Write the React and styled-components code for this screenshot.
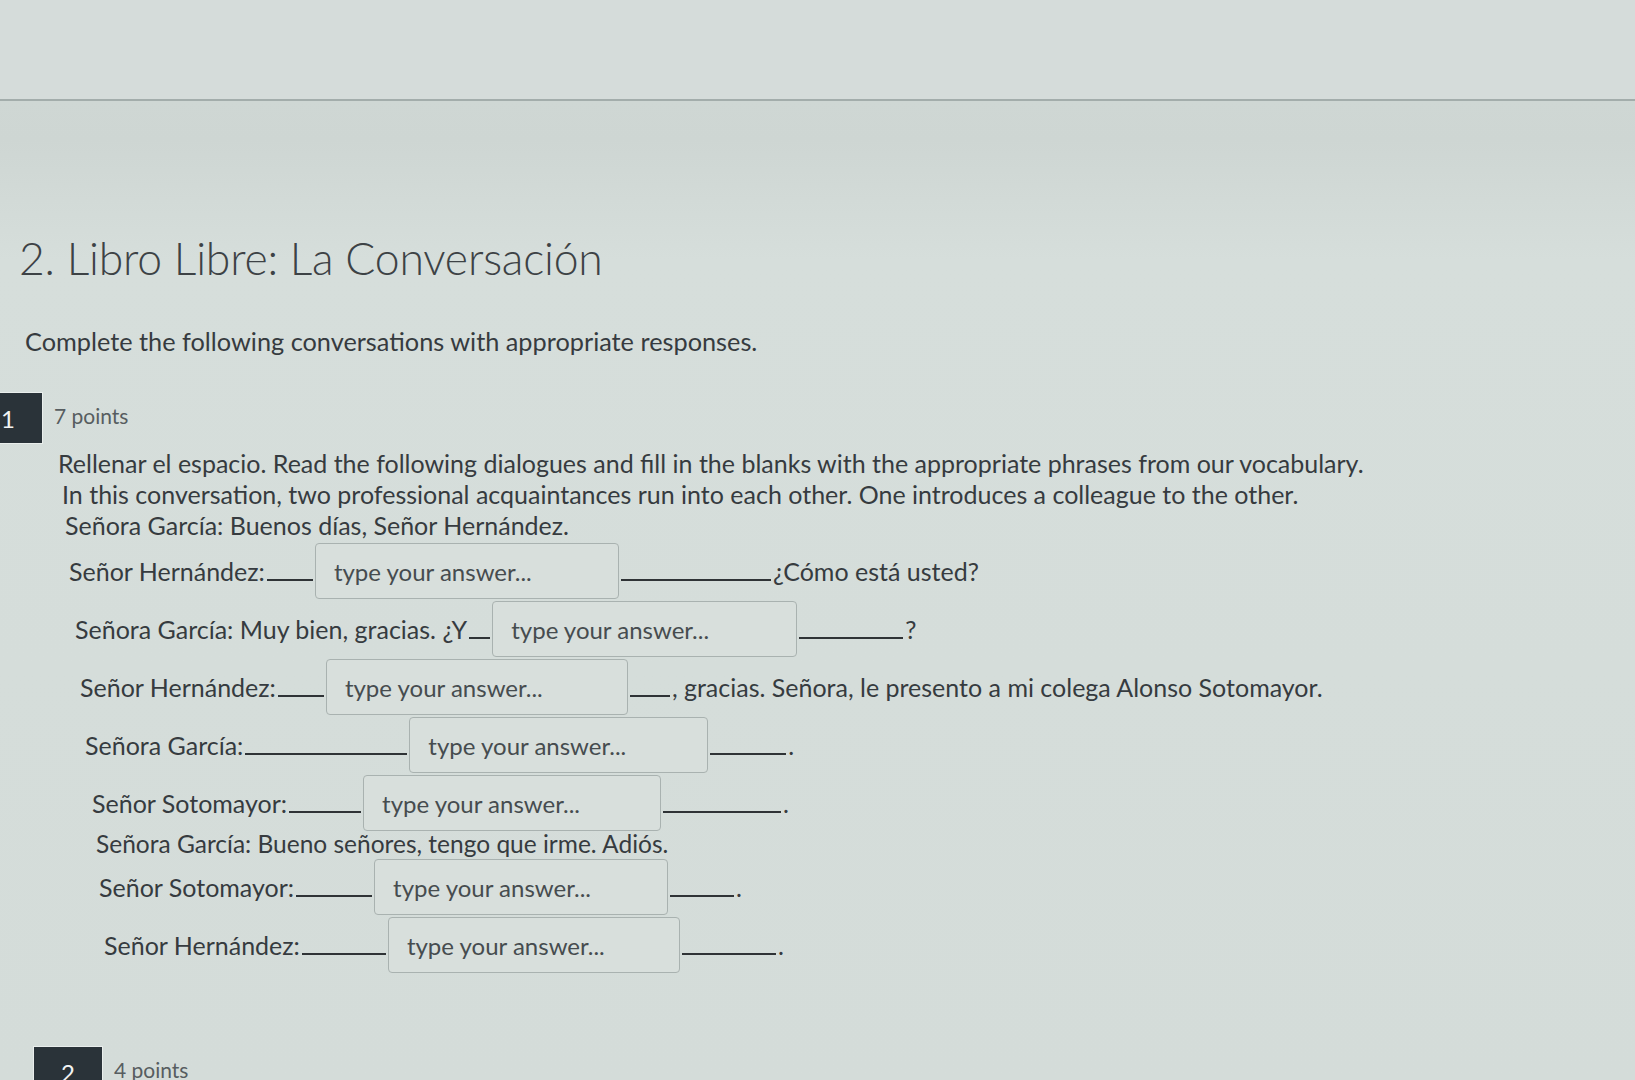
import React from 'react';
import styled, { createGlobalStyle } from 'styled-components';

const GlobalStyle = createGlobalStyle`
    html, body {
        margin: 0;
        padding: 0;
        background: #d4dcd9;
    }
    body {
        font-family: Lato, "Liberation Sans", sans-serif;
        color: #363b3f;
        overflow: hidden;
    }
`

const Page = styled.div`
    width: 1635px;
    height: 1080px;
    overflow: hidden;
    background: linear-gradient(180deg, #d3dbd8 0px, #cfd7d4 100px, #ced6d3 140px, #d6dedb 260px, #d4dcd9 100%);
`

const TopBar = styled.header`
    height: 99px;
    border-bottom: 2px solid #a3adab;
    background: #d5dcda;
`

const Title = styled.h1`
    margin: 129px 0 0 19px;
    font-size: 44.5px;
    line-height: 56px;
    font-weight: 300;
    color: #3d4245;
    letter-spacing: -0.2px;
`

const Intro = styled.p`
    margin: 40px 0 0 25px;
    font-size: 25.3px;
    line-height: 30px;
`

const PointsRow = styled.div`
    display: flex;
    align-items: center;
    gap: 12px;
    margin: ${p => p.top}px 0 0 ${p => p.offset}px;
`

const Badge = styled.div`
    width: 68px;
    height: 50px;
    display: flex;
    align-items: center;
    justify-content: center;
    background: #2a3339;
    color: #f2f4f4;
    font-size: 24px;
    box-shadow: 0 0 0 1px #e9eeec;
`

const Points = styled.span`
    font-size: 21px;
    line-height: 24px;
    margin-bottom: 4px;
    color: #575d60;
`

const Question = styled.section`
    margin-top: 5px;
`

const Line = styled.p`
    margin: 0;
    padding-left: ${p => p.indent}px;
    font-size: 25px;
    line-height: 31px;
    white-space: nowrap;
`

const Rows = styled.div`
    display: flex;
    flex-direction: column;
    gap: 2px;
    margin-top: 2px;
`

const Row = styled.div`
    display: flex;
    align-items: baseline;
    padding-left: ${p => p.indent}px;
    font-size: 25px;
    line-height: 31px;
    white-space: nowrap;
`

const TextRow = styled(Line)`
    font-size: 24.5px;
    line-height: 26px;
    margin-top: -2px;
`

const Blank = styled.span`
    display: inline-block;
    width: ${p => p.w}px;
    height: 20px;
    margin: 0 2px;
    border-bottom: 2px solid #2f3336;
`

const Answer = styled.input`
    box-sizing: border-box;
    width: ${p => p.w}px;
    height: 56px;
    padding: 0 18px;
    border: 1px solid #a9b2b0;
    border-radius: 4px;
    background: #d8dfdc;
    font-family: Lato, "Liberation Sans", sans-serif;
    font-size: 24px;
    color: #363b3f;
    outline: none;

    &::placeholder {
        color: #464c4f;
        opacity: 1;
    }
`

const rows = [
    { indent: 69, label: 'Señor Hernández:', a: 46, w: 304, b: 150, tail: '¿Cómo está usted?' },
    { indent: 75, label: 'Señora García: Muy bien, gracias. ¿Y', a: 21, w: 305, b: 104, tail: '?' },
    { indent: 80, label: 'Señor Hernández:', a: 46, w: 302, b: 40, tail: ', gracias. Señora, le presento a mi colega Alonso Sotomayor.' },
    { indent: 85, label: 'Señora García:', a: 162, w: 299, b: 76, tail: '.' },
    { indent: 92, label: 'Señor Sotomayor:', a: 72, w: 298, b: 118, tail: '.' },
    { text: 'Señora García: Bueno señores, tengo que irme. Adiós.', indent: 96 },
    { indent: 99, label: 'Señor Sotomayor:', a: 76, w: 294, b: 64, tail: '.' },
    { indent: 104, label: 'Señor Hernández:', a: 84, w: 292, b: 94, tail: '.' },
]

const App = () => {
    return (
        <Page>
            <GlobalStyle />
            <TopBar />
            <Title>2. Libro Libre: La Conversación</Title>
            <Intro>Complete the following conversations with appropriate responses.</Intro>

            <PointsRow top={37} offset={-26}>
                <Badge>1</Badge>
                <Points>7 points</Points>
            </PointsRow>

            <Question>
                <Line indent={58}>Rellenar el espacio. Read the following dialogues and fill in the blanks with the appropriate phrases from our vocabulary.</Line>
                <Line indent={62}>In this conversation, two professional acquaintances run into each other. One introduces a colleague to the other.</Line>
                <Line indent={65}>Señora García: Buenos días, Señor Hernández.</Line>

                <Rows>
                    {rows.map((r, i) => r.text ? (
                        <TextRow key={i} indent={r.indent}>{r.text}</TextRow>
                    ) : (
                        <Row key={i} indent={r.indent}>
                            <span>{r.label}</span>
                            <Blank w={r.a} />
                            <Answer w={r.w} placeholder='type your answer...' />
                            <Blank w={r.b} />
                            <span>{r.tail}</span>
                        </Row>
                    ))}
                </Rows>
            </Question>

            <PointsRow top={74} offset={34}>
                <Badge>2</Badge>
                <Points>4 points</Points>
            </PointsRow>
        </Page>
    )
}

export default App;
